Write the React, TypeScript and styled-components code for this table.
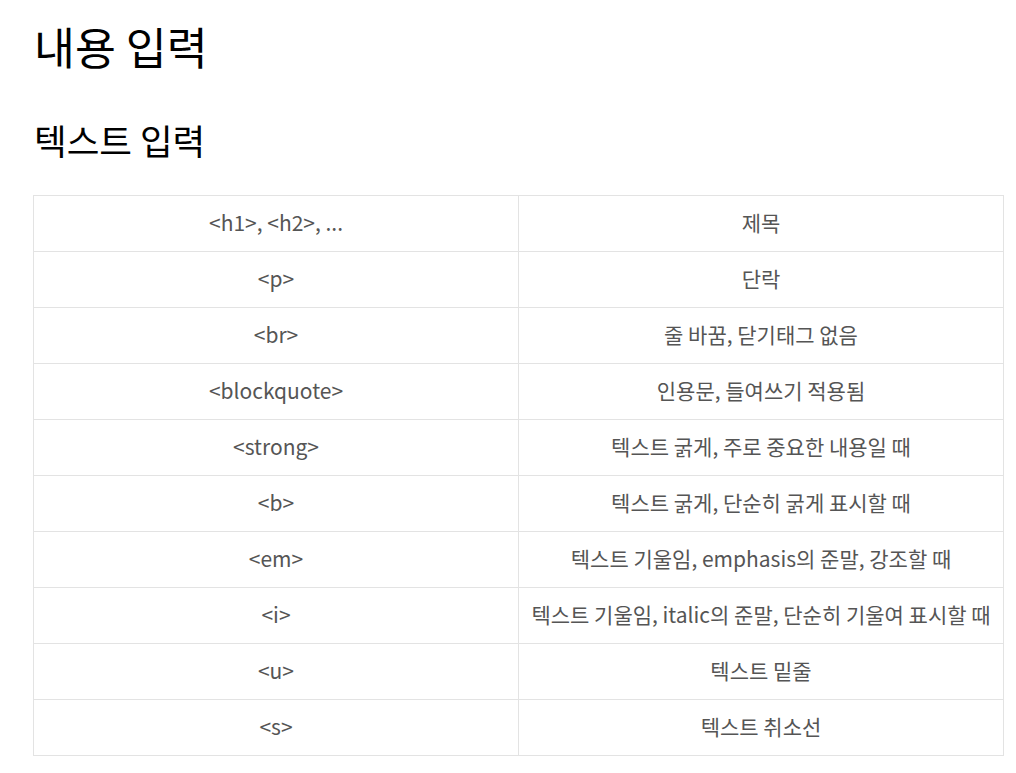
import React from "react";
import styled, { createGlobalStyle } from "styled-components";

const GlobalStyle = createGlobalStyle`
  body {
    margin: 0;
    background: #fff;
    font-family: "Noto Sans CJK KR", "Noto Sans", sans-serif;
  }
`;

const Page = styled.main`
  padding: 20px 12px 0 33px;
`;

const Title = styled.h1`
  margin: 0 0 0 1px;
  font-size: 44.5px;
  font-weight: 400;
  line-height: 52px;
  color: #000;
`;

const SubTitle = styled.h2`
  margin: 47px 0 0 1px;
  font-size: 35.5px;
  font-weight: 400;
  line-height: 42px;
  color: #000;
`;

const Table = styled.table`
  width: 100%;
  margin-top: 34px;
  border-collapse: collapse;
  table-layout: fixed;
`;

const Cell = styled.td`
  height: 52px;
  padding: 0 8px 3px;
  border: 1px solid #e3e3e3;
  text-align: center;
  vertical-align: middle;
  font-size: 21px;
  color: #555;
`;

const rows = [
  ["<h1>, <h2>, ...", "제목"],
  ["<p>", "단락"],
  ["<br>", "줄 바꿈, 닫기태그 없음"],
  ["<blockquote>", "인용문, 들여쓰기 적용됨"],
  ["<strong>", "텍스트 굵게, 주로 중요한 내용일 때"],
  ["<b>", "텍스트 굵게, 단순히 굵게 표시할 때"],
  ["<em>", "텍스트 기울임, emphasis의 준말, 강조할 때"],
  ["<i>", "텍스트 기울임, italic의 준말, 단순히 기울여 표시할 때"],
  ["<u>", "텍스트 밑줄"],
  ["<s>", "텍스트 취소선"],
];

const App = () => {
  return (
    <>
      <GlobalStyle />
      <Page>
        <Title>내용 입력</Title>
        <SubTitle>텍스트 입력</SubTitle>
        <Table>
          <tbody>
            {rows.map(([tag, desc]) => (
              <tr key={tag}>
                <Cell>{tag}</Cell>
                <Cell>{desc}</Cell>
              </tr>
            ))}
          </tbody>
        </Table>
      </Page>
    </>
  );
};

export default App;
